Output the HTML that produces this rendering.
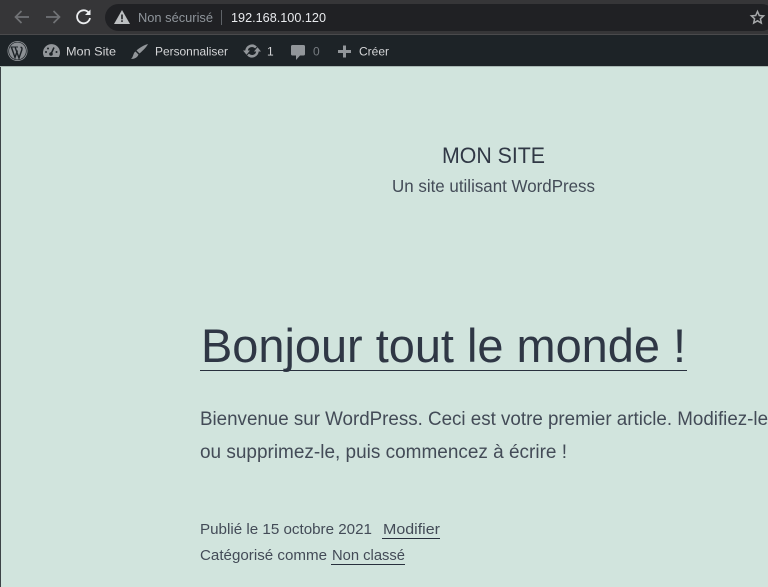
<!DOCTYPE html>
<html lang="fr">
<head>
<meta charset="utf-8">
<title>Mon Site</title>
<style>
html,body{margin:0;padding:0;width:768px;height:587px;overflow:hidden;background:#d1e4dd}
svg{display:block}
text{font-family:"Liberation Sans",sans-serif}
</style>
</head>
<body>
<svg width="768" height="587" viewBox="0 0 768 587" xmlns="http://www.w3.org/2000/svg">
  <rect width="768" height="587" fill="#d1e4dd"/>
  <rect x="0" y="66" width="1" height="521" fill="#3d4347"/>

  <!-- browser toolbar -->
  <rect width="768" height="35" fill="#363638"/>
  <rect y="34" width="768" height="1" fill="#4a4a4c"/>
  <rect x="105" y="4" width="670" height="27" rx="13.5" fill="#202124"/>

  <path d="M29 17H16M21.5 11 15.5 17 21.5 23" fill="none" stroke="#707275" stroke-width="1.7"/>
  <path d="M46 17H59M53.500 11 59.500 17 53.500 23" fill="none" stroke="#707275" stroke-width="1.700"/>
  <path d="M88.500 12.500A6.500 6.500 0 1 0 90 18" fill="none" stroke="#eceef0" stroke-width="1.800"/>
  <path d="M90.500 9.500V15H85Z" fill="#eceef0"/>

  <path d="M122 10 130 24H114Z" fill="#bcbfc1"/>
  <rect x="121.200" y="14.500" width="1.600" height="4.800" fill="#202124"/>
  <rect x="121.200" y="20.300" width="1.600" height="1.600" fill="#202124"/>
  <text x="138" y="22" font-size="12.500" fill="#8f959b" textLength="75" lengthAdjust="spacingAndGlyphs">Non sécurisé</text>
  <rect x="221" y="10" width="1" height="15" fill="#5f6368"/>
  <text x="231" y="22" font-size="12.500" fill="#e8eaed" textLength="95" lengthAdjust="spacingAndGlyphs">192.168.100.120</text>
  <path d="M757.500 11.500 759.300 15.500 763.600 15.900 760.400 18.800 761.300 23 757.500 20.800 753.700 23 754.600 18.800 751.400 15.900 755.700 15.500Z" fill="none" stroke="#a6a8aa" stroke-width="1.500"/>

  <!-- admin bar -->
  <rect y="35" width="768" height="31" fill="#1d2327"/>
  <rect y="66" width="768" height="1" fill="#a9b8b3"/>

  <!-- WP logo -->
  <circle cx="17.500" cy="51" r="10" fill="#8c9094"/>
  <circle cx="17.500" cy="51" r="8.800" fill="none" stroke="#1d2327" stroke-width="0.700"/>
  <path d="M11.500 47.500 15 57.500 17.400 50.500M15.200 47.500 19 58 21.800 50C22.500 48 21.500 47 20.500 47.500" fill="none" stroke="#1d2327" stroke-width="1.400"/>
  <path d="M10.500 47H18" stroke="#1d2327" stroke-width="1"/>

  <!-- dashboard icon -->
  <path d="M44.200 57A8.500 8.500 0 1 1 58.800 57Z" fill="#9296 9a" style="fill:#92969a"/>
  <path d="M51 54 54 47.500" stroke="#1d2327" stroke-width="1.500"/>
  <circle cx="51" cy="54" r="1.800" fill="#1d2327"/>
  <circle cx="46" cy="52" r="1" fill="#1d2327"/>
  <circle cx="48" cy="48.500" r="1" fill="#1d2327"/>
  <circle cx="56.500" cy="52" r="1" fill="#1d2327"/>
  <text x="66" y="55.500" font-size="12" fill="#d4d5d7" textLength="50" lengthAdjust="spacingAndGlyphs">Mon Site</text>

  <!-- brush icon -->
  <path d="M148 44C147 46.500 142 51.500 139.500 53.500L136.500 50.500C139 48 145 44.500 148 44Z" fill="#92969a"/>
  <path d="M135.500 51.500 138.500 54.500C137.500 57.500 134.500 59 131 59C133.500 57 133 53 135.500 51.500Z" fill="#92969a"/>
  <text x="155" y="55.500" font-size="12" fill="#d4d5d7" textLength="73" lengthAdjust="spacingAndGlyphs">Personnaliser</text>

  <!-- updates icon -->
  <path d="M246.500 51A5.500 5.500 0 0 1 256 47.500M257.500 51A5.500 5.500 0 0 1 248 54.500" fill="none" stroke="#92969a" stroke-width="2.500"/>
  <path d="M243 50.500H250L246.500 54.800ZM261 51.500H254L257.500 47.200Z" fill="#92969a"/>
  <text x="267" y="55.500" font-size="12" fill="#d4d5d7">1</text>

  <!-- comment icon -->
  <path d="M292.500 45H303.500A1.500 1.500 0 0 1 305 46.500V54A1.500 1.500 0 0 1 303.500 55.500H300L296 60V55.500H292.500A1.500 1.500 0 0 1 291 54V46.500A1.500 1.500 0 0 1 292.500 45Z" fill="#92969a"/>
  <text x="313" y="55.500" font-size="12" fill="#777c81">0</text>

  <!-- plus icon -->
  <path d="M344.500 45.500V57.500M338 51.500H351" stroke="#92969a" stroke-width="3"/>
  <text x="359" y="55.500" font-size="12" fill="#d4d5d7" textLength="30" lengthAdjust="spacingAndGlyphs">Créer</text>

  <!-- site header -->
  <text x="442" y="163" font-size="22" fill="#303845" textLength="103" lengthAdjust="spacingAndGlyphs">MON SITE</text>
  <text x="392" y="192" font-size="17.500" fill="#434b57" textLength="203" lengthAdjust="spacingAndGlyphs">Un site utilisant WordPress</text>

  <!-- post -->
  <text x="201" y="362" font-size="47" fill="#2f3745" textLength="485" lengthAdjust="spacingAndGlyphs">Bonjour tout le monde !</text>
  <rect x="200" y="370" width="487" height="1" fill="#28303d"/>

  <text x="200" y="425" font-size="19" fill="#434b57" textLength="568" lengthAdjust="spacingAndGlyphs">Bienvenue sur WordPress. Ceci est votre premier article. Modifiez-le</text>
  <text x="200" y="458" font-size="19" fill="#434b57" textLength="367" lengthAdjust="spacingAndGlyphs">ou supprimez-le, puis commencez à écrire !</text>

  <text x="200" y="534" font-size="15" fill="#434b57" textLength="172" lengthAdjust="spacingAndGlyphs">Publié le 15 octobre 2021</text>
  <text x="383" y="534" font-size="15" fill="#434b57" textLength="57" lengthAdjust="spacingAndGlyphs">Modifier</text>
  <rect x="382" y="538" width="58" height="1" fill="#28303d"/>
  <text x="200" y="560" font-size="15" fill="#434b57" textLength="127" lengthAdjust="spacingAndGlyphs">Catégorisé comme</text>
  <text x="332" y="560" font-size="15" fill="#434b57" textLength="73" lengthAdjust="spacingAndGlyphs">Non classé</text>
  <rect x="331" y="564" width="74" height="1" fill="#28303d"/>
</svg>
</body>
</html>
